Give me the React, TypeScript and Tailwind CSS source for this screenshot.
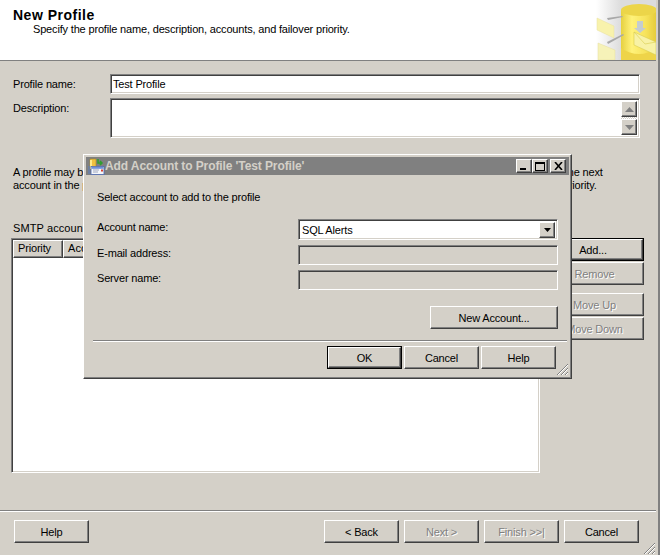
const raised = 'border border-t-white border-l-white border-r-[#404040] border-b-[#404040] shadow-[inset_-1px_-1px_0_#808080] bg-[#d4d0c8]'
const sunken = 'border border-t-[#808080] border-l-[#808080] border-r-white border-b-white shadow-[inset_1px_1px_0_#404040,inset_-1px_-1px_0_#d4d0c8]'

export default function App() {
  return (
    <div className="relative w-[660px] h-[555px] overflow-hidden bg-[#d4d0c8] text-[11px] leading-[14px] tracking-[-0.17px] text-black font-['Liberation_Sans',sans-serif]">
      <div className="flex flex-col h-full w-[660px] border-r-2 border-r-[#808080]">
        <Header />
        <div className="flex-1 flex flex-col pt-[13px] px-[12px]">
          <div className="flex items-center h-[20px]">
            <span className="w-[98px] shrink-0 ml-[1px]">Profile name:</span>
            <div className={`${sunken} bg-white w-[530px] h-[20px] px-[2px] pt-[2px] -ml-[1px]`}>Test Profile</div>
          </div>
          <div className="flex mt-[4px] h-[40px]">
            <span className="w-[98px] shrink-0 ml-[1px] mt-[3px]">Description:</span>
            <div className={`${sunken} bg-white w-[530px] h-[40px] -ml-[1px] flex justify-end p-[2px]`}>
              <Scrollbar />
            </div>
          </div>
          <div className="mt-[28px] ml-[1px] w-[600px] leading-[13px]">
            <p className="whitespace-nowrap">A profile may be associated with multiple SMTP accounts. If an account fails while sending an e-mail, the profile uses the next</p>
            <p className="whitespace-nowrap tracking-[-0.15px]">account in the priority list. Specify the accounts associated with the profile, and move the accounts to set the failover priority.</p>
          </div>
          <p className="mt-[29px] ml-[1px] tracking-[0.1px]">SMTP accounts:</p>
          <div className="flex mt-[3px]">
            <div className={`${sunken} bg-white w-[529px] h-[235px] -ml-[1px] p-[1px]`}>
              <div className="flex h-[18px]">
                <div className={`${raised} w-[50px] pl-[4px] leading-[15px]`}>Priority</div>
                <div className={`${raised} w-[130px] pl-[4px] leading-[15px] tracking-[0.1px]`}>Account Name</div>
                <div className={`${raised} w-[170px] pl-[4px] leading-[15px]`}>E-mail Address</div>
              </div>
            </div>
            <div className="ml-[5px] w-[99px] flex flex-col">
              <button className="h-[23px] border border-black"><span className={`${raised} h-full flex items-center justify-center pr-[3px]`}>Add...</span></button>
              <SideButton className="mt-[1px]">Remove</SideButton>
              <SideButton className="mt-[8px]">Move Up</SideButton>
              <SideButton className="mt-[1px]">Move Down</SideButton>
            </div>
          </div>
        </div>
        <Footer />
      </div>
      <Dialog />
    </div>
  )
}

function Header() {
  return (
    <div className="h-[61px] shrink-0 mr-[2px] bg-white border-b border-b-[#808080] flex justify-between">
      <div className="pl-[13px] pt-[8px]">
        <h1 className="font-bold text-[14px] leading-[14px] tracking-[0.5px]">New Profile</h1>
        <p className="ml-[20px]">Specify the profile name, description, accounts, and failover priority.</p>
      </div>
      <Logo />
    </div>
  )
}

function Footer() {
  return (
    <div className="h-[45px] shrink-0 mr-[2px] relative border-t border-t-[#808080] shadow-[inset_0_1px_0_#fff] flex justify-between pl-[14px] pr-[17px] pt-[9px]">
      <WizardButton>Help</WizardButton>
      <div className="flex gap-[5px]">
        <WizardButton>{'< Back'}</WizardButton>
        <WizardButton disabled>{'Next >'}</WizardButton>
        <WizardButton disabled>{'Finish >>|'}</WizardButton>
        <WizardButton>Cancel</WizardButton>
      </div>
      <Grip className="absolute right-0 bottom-0" />
    </div>
  )
}

function WizardButton({ children, disabled }: { children: React.ReactNode; disabled?: boolean }) {
  return (
    <button className={`${raised} w-[75px] h-[23px] flex items-center justify-center ${disabled ? 'text-[#808080] [text-shadow:1px_1px_0_#fff]' : ''}`}>
      {children}
    </button>
  )
}

function SideButton({ children, className }: { children: React.ReactNode; className: string }) {
  return (
    <button className={`${raised} ${className} h-[23px] flex items-center justify-center text-[#808080] [text-shadow:1px_1px_0_#fff]`}>
      <span className="whitespace-nowrap">{children}</span>
    </button>
  )
}

function Scrollbar() {
  return (
    <div className="w-[16px] h-full flex flex-col bg-[repeating-conic-gradient(#d4d0c8_0_25%,#fff_0_50%)] bg-[length:2px_2px]">
      <div className={`${raised} h-[16px] flex items-center justify-center`}>
        <svg width="9" height="5" viewBox="0 0 9 5"><path d="M4.5 0 L9 5 H0 Z" fill="#808080" /></svg>
      </div>
      <div className="flex-1" />
      <div className={`${raised} h-[16px] flex items-center justify-center`}>
        <svg width="9" height="5" viewBox="0 0 9 5"><path d="M0 0 H9 L4.5 5 Z" fill="#808080" /></svg>
      </div>
    </div>
  )
}

function Dialog() {
  return (
    <div className="absolute left-[83px] top-[154px] w-[489px] h-[225px] bg-[#d4d0c8] border border-t-white border-l-white border-r-[#404040] border-b-[#404040] shadow-[inset_-1px_-1px_0_#808080] p-[2px] flex flex-col">
      <div className="h-[18px] bg-[#808080] flex items-center pl-[1px] pr-[3px]">
        <DialogIcon />
        <span className="font-bold text-[12px] text-[#d4d0c8] tracking-[-0.1px] whitespace-nowrap">Add Account to Profile 'Test Profile'</span>
        <div className="ml-auto flex">
          <TitleButton><span className="block w-[6px] h-[2px] bg-black mt-[6px] -ml-[2px]" /></TitleButton>
          <TitleButton><span className="block w-[10px] h-[9px] border border-black border-t-2" /></TitleButton>
          <TitleButton className="ml-[2px]">
            <svg width="9" height="8" viewBox="0 0 9 8"><path d="M1 0 L8 8 M8 0 L1 8" stroke="#000" strokeWidth="1.6" /></svg>
          </TitleButton>
        </div>
      </div>
      <div className="flex-1 flex flex-col pl-[11px] pr-[11px]">
        <p className="mt-[15px]">Select account to add to the profile</p>
        <div className="mt-[15px] flex flex-col gap-[5px]">
          <div className="flex h-[21px]">
            <span className="w-[201px] shrink-0 mt-[1px]">Account name:</span>
            <div className={`${sunken} bg-white w-[260px] flex justify-between p-[2px] pl-[3px] h-[21px]`}>
              <span className="pt-[1px]">SQL Alerts</span>
              <span className={`${raised} w-[16px] h-[16px] flex items-center justify-center`}>
                <svg width="7" height="4" viewBox="0 0 7 4"><path d="M0 0 H7 L3.5 4 Z" fill="#000" /></svg>
              </span>
            </div>
          </div>
          <Field label="E-mail address:" />
          <Field label="Server name:" />
        </div>
        <div className="mt-[16px] flex justify-end">
          <button className={`${raised} w-[128px] h-[23px]`}>New Account...</button>
        </div>
        <div className="mt-[11px] h-[2px] border-t border-t-[#808080] border-b border-b-white -ml-[4px] -mr-[9px]" />
        <div className="mt-[4px] flex justify-end gap-[2px] pr-[2px]">
          <button className="w-[75px] h-[23px] border border-black"><span className={`${raised} h-full flex items-center justify-center`}>OK</span></button>
          <button className={`${raised} w-[75px] h-[23px]`}>Cancel</button>
          <button className={`${raised} w-[75px] h-[23px]`}>Help</button>
        </div>
      </div>
      <Grip className="absolute right-[2px] bottom-[2px]" />
    </div>
  )
}

function Field({ label }: { label: string }) {
  return (
    <div className="flex h-[20px]">
      <span className="w-[201px] shrink-0 mt-[1px]">{label}</span>
      <div className={`${sunken} w-[260px] h-[20px]`} />
    </div>
  )
}

function TitleButton({ children, className = '' }: { children: React.ReactNode; className?: string }) {
  return (
    <div className={`${raised} ${className} w-[16px] h-[14px] flex items-center justify-center`}>
      {children}
    </div>
  )
}

function Grip({ className }: { className: string }) {
  return (
    <svg className={className} width="13" height="13" viewBox="0 0 13 13">
      <path d="M12 1 L1 12 M12 5 L5 12 M12 9 L9 12" stroke="#808080" strokeWidth="1" />
      <path d="M12 2 L2 12 M12 6 L6 12 M12 10 L10 12" stroke="#fff" strokeWidth="1" />
    </svg>
  )
}

function DialogIcon() {
  return (
    <svg width="18" height="17" viewBox="0 0 18 17" className="shrink-0">
      <path d="M3 1 H9 V11 H3 Z" fill="#f0c040" stroke="#a88a20" strokeWidth="0.6" />
      <path d="M3 2 H5 V11 H3 Z" fill="#ffe98a" />
      <path d="M11 1 V5 H15 M13 3 L15 5 L13 7" fill="none" stroke="#2f9e2f" strokeWidth="1.5" />
      <path d="M1 9 H3 M1 11 H3 M1 13 H3 M1 15 H3" stroke="#5a7fc0" strokeWidth="1" />
      <rect x="4" y="8.5" width="13" height="8" fill="#f4f6fb" stroke="#4a66b0" strokeWidth="0.8" />
      <rect x="4.5" y="9" width="12" height="1.8" fill="#6f8fd8" />
      <rect x="14" y="11.5" width="2" height="2" fill="#d84030" />
      <path d="M6 12 H12 M6 14 H11" stroke="#8a94b0" strokeWidth="0.8" />
    </svg>
  )
}

function Logo() {
  return (
    <svg width="60" height="60" viewBox="0 0 60 60" className="shrink-0">
      <defs>
        <linearGradient id="fade" x1="0" x2="1" y1="0" y2="0">
          <stop offset="0" stopColor="#fff" />
          <stop offset="0.42" stopColor="#dcdcdc" />
        </linearGradient>
        <linearGradient id="can" x1="0" x2="1" y1="0" y2="0">
          <stop offset="0" stopColor="#e6d040" />
          <stop offset="0.3" stopColor="#fff27a" />
          <stop offset="0.7" stopColor="#f6e25a" />
          <stop offset="1" stopColor="#e4ca38" />
        </linearGradient>
        <filter id="soft"><feGaussianBlur stdDeviation="0.45" /></filter>
      </defs>
      <rect width="60" height="60" fill="url(#fade)" />
      <g filter="url(#soft)">
        <path d="M25 10 V60 H61 V10 Z" fill="url(#can)" />
        <ellipse cx="43" cy="10" rx="18" ry="6" fill="#ecd548" />
        <path d="M25 48 Q43 60 61 48 V60 H25 Z" fill="#eed44a" />
        <path d="M1 18 L18 26 V38 L1 30 Z" fill="#f8f2ac" stroke="#e8e0a0" strokeWidth="0.5" />
        <path d="M2 43 L19 50 V60 H2 Z" fill="#f6f2b8" stroke="#e4dd9c" strokeWidth="0.5" />
        <path d="M12 20 L27 17 L26 16 L11 18 Z" fill="#a8a8a8" />
        <path d="M12 44 L28 35 L27 34 L11 42 Z" fill="#a8a8a8" />
        <path d="M41 21 H47 V28 H50 L44 33 L38 28 H41 Z" fill="#c4ccd0" />
        <path d="M38 32 L60 42 V55 L38 45 Z" fill="#f8f2a6" stroke="#d8cc50" strokeWidth="0.6" />
        <path d="M38 32 L49 44 L60 42" fill="none" stroke="#d8cc50" strokeWidth="0.6" />
      </g>
    </svg>
  )
}
